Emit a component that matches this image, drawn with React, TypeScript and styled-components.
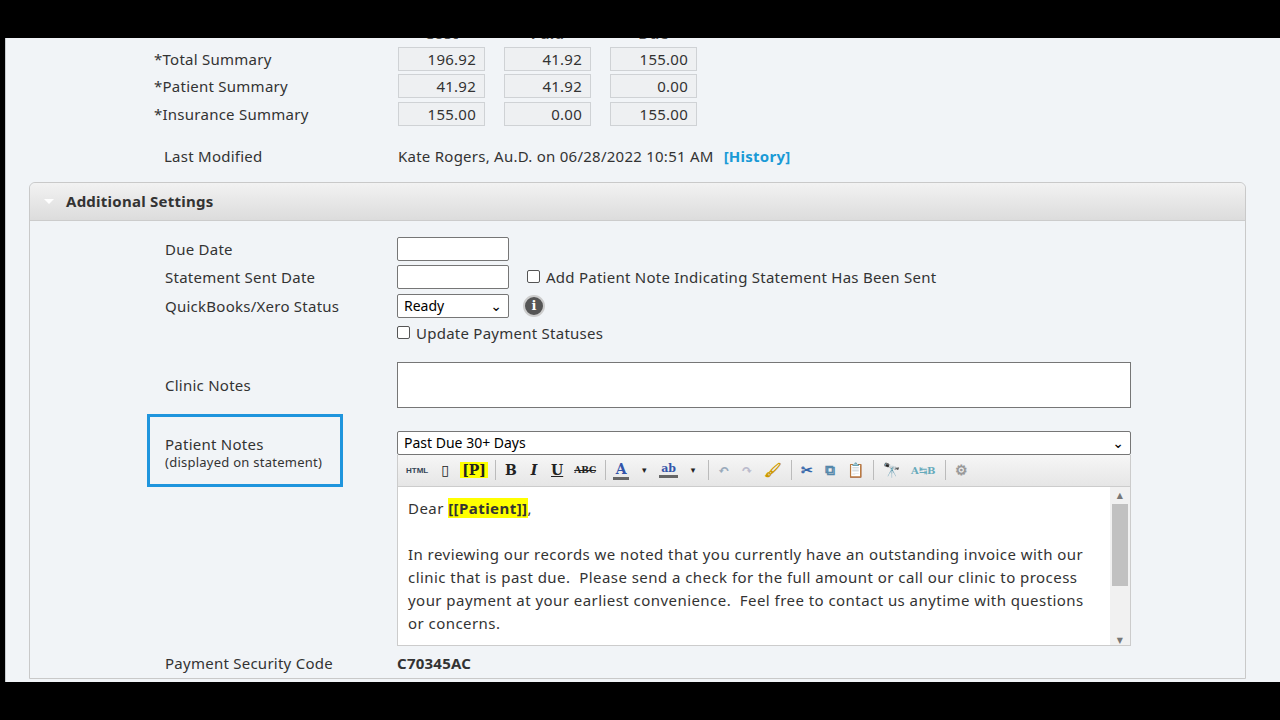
import React from "react";
import styled, { createGlobalStyle } from "styled-components";

const G = createGlobalStyle`
  html,body{margin:0;padding:0;background:#000;}
  *{box-sizing:border-box;}
  body{font-family:"Noto Sans","DejaVu Sans",sans-serif;font-size:15px;color:#333;letter-spacing:0.25px;}
`;
const Frame = styled.div`width:1280px;height:720px;display:flex;flex-direction:column;background:#000;`;
const Page = styled.div`margin-top:38px;height:644px;overflow:hidden;background:#f1f4f7;border-left:1px solid #c8ccd0;margin-left:5px;`;
const Top = styled.div`padding:0 0 0 148px;margin-top:-17px;`;
const Row = styled.div<{h?:number}>`display:flex;align-items:center;height:${p=>p.h||27.5}px;`;
const Lbl = styled.div<{w?:number;pl?:number}>`width:${p=>p.w||244}px;padding-left:${p=>p.pl||0}px;flex-shrink:0;`;
const Num = styled.div`width:87px;height:24px;margin-right:19px;border:1px solid #cfd2d5;background:#eef0f2;text-align:right;padding-right:8px;line-height:22px;font-size:15px;`;
const Head = styled.div`width:87px;margin-right:19px;text-align:center;font-weight:700;color:#555;font-size:15px;`;
const Link = styled.span`color:#1a9ad6;font-weight:700;margin-left:10px;`;
const Panel = styled.div`margin:6px 34px 0 23px;border:1px solid #c9c9c9;border-radius:6px 6px 0 0;`;
const PHead = styled.div`height:38px;background:linear-gradient(#f2f2f2,#dcdcdc);display:flex;align-items:center;padding-left:14px;font-weight:700;color:#333;border-bottom:1px solid #ccc;border-radius:6px 6px 0 0;`;
const Tri = styled.span`width:0;height:0;border-left:5px solid transparent;border-right:5px solid transparent;border-top:5px solid #fff;margin-right:12px;`;
const PBody = styled.div`padding:14px 0 0 135px;`;
const Inp = styled.div<{w?:number}>`width:${p=>p.w||112}px;height:24px;border:1px solid #767676;background:#fff;border-radius:2px;`;
const Sel = styled.div<{w?:number}>`width:${p=>p.w||112}px;height:24px;border:1px solid #767676;background:#fff;border-radius:2px;display:flex;align-items:center;justify-content:space-between;padding:0 6px;font-size:14px;color:#000;letter-spacing:0;`;
const Chk = styled.span`display:inline-block;width:13px;height:13px;border:1px solid #555;border-radius:2px;background:#fff;margin-right:6px;`;
const Info = styled.div`width:22px;height:22px;border-radius:50%;background:#555;border:2px solid #ccc;color:#fff;font-weight:700;font-size:13px;display:flex;align-items:center;justify-content:center;margin-left:14px;font-family:"DejaVu Serif",serif;`;
const TA = styled.div`width:734px;height:46px;border:1px solid #767676;background:#fff;`;
const Blue = styled.div`width:196px;height:73px;border:3px solid #1f95dd;margin-left:-18px;padding:18px 0 0 15px;line-height:18px;`;
const Small = styled.div`font-size:13px;line-height:18px;`;
const Toolbar = styled.div`width:734px;height:32px;border:1px solid #ccc;border-top:none;background:linear-gradient(#f6f6f6,#e6e6e6);display:flex;align-items:center;padding-left:6px;gap:7px;letter-spacing:0;`;
const Sep = styled.span`width:1px;height:20px;background:#bbb;`;
const TB = styled.span<{c?:string;bg?:string}>`font-weight:700;color:${p=>p.c||"#222"};background:${p=>p.bg||"transparent"};font-size:14px;padding:0 2px;font-family:"DejaVu Serif",serif;min-width:16px;text-align:center;`;
const Editor = styled.div`width:734px;height:159px;border:1px solid #ccc;border-top:none;background:#fff;display:flex;`;
const EText = styled.div`flex:1;padding:10px 10px;line-height:23px;color:#333;letter-spacing:0.45px;`;
const Scroll = styled.div`width:20px;background:#f1f1f1;display:flex;flex-direction:column;align-items:center;padding-top:2px;font-size:8px;color:#777;`;
const Thumb = styled.div`width:16px;height:82px;background:#c1c1c1;margin:4px 0;`;
const Hl = styled.span`background:#ffff00;font-weight:700;`;
const NotesWrap = styled.div`display:flex;margin-top:-11px;`;
const NotesCol = styled.div`margin-top:17px;`;

export default function App(){
  return <Frame><G/><Page>
    <Top>
      <Row h={24}><Lbl/><Head>Cost</Head><Head>Paid</Head><Head>Due</Head></Row>
      {[["*Total Summary","196.92","41.92","155.00"],["*Patient Summary","41.92","41.92","0.00"],["*Insurance Summary","155.00","0.00","155.00"]].map(r=>
        <Row key={r[0]}><Lbl>{r[0]}</Lbl><Num>{r[1]}</Num><Num>{r[2]}</Num><Num>{r[3]}</Num></Row>)}
      <Row h={40} style={{marginTop:8}}><Lbl pl={10}>Last Modified</Lbl><span>Kate Rogers, Au.D. on 06/28/2022 10:51 AM</span><Link>[History]</Link></Row>
    </Top>
    <Panel>
      <PHead><Tri/>Additional Settings</PHead>
      <PBody>
        <Row h={28}><Lbl w={232}>Due Date</Lbl><Inp/></Row>
        <Row h={28}><Lbl w={232}>Statement Sent Date</Lbl><Inp/><span style={{marginLeft:18,display:"flex",alignItems:"center"}}><Chk/>Add Patient Note Indicating Statement Has Been Sent</span></Row>
        <Row h={30}><Lbl w={232}>QuickBooks/Xero Status</Lbl><Sel>Ready<span>⌄</span></Sel><Info>i</Info></Row>
        <Row h={24}><Lbl w={232}/><Chk/>Update Payment Statuses</Row>
        <Row h={80}><Lbl w={232}>Clinic Notes</Lbl><TA/></Row>
        <NotesWrap>
          <Lbl w={250} style={{marginRight:-18}}><Blue>Patient Notes<Small>(displayed on statement)</Small></Blue></Lbl>
          <NotesCol>
            <Sel w={734}>Past Due 30+ Days<span>⌄</span></Sel>
            <Toolbar>
              <TB c="#345" style={{fontSize:8,fontFamily:"Liberation Sans"}}>HTML</TB><TB>▯</TB><TB bg="#ff0">[P]</TB><Sep/>
              <TB>B</TB><TB style={{fontStyle:"italic"}}>I</TB><TB style={{textDecoration:"underline"}}>U</TB><TB style={{fontSize:9,textDecoration:"line-through"}}>ABC</TB><Sep/>
              <TB c="#3355aa" style={{borderBottom:"3px solid #666"}}>A</TB><TB style={{fontSize:9}}>▾</TB><TB c="#3355aa" style={{fontSize:11,borderBottom:"3px solid #666"}}>ab</TB><TB style={{fontSize:9}}>▾</TB><Sep/>
              <TB c="#9ab">↶</TB><TB c="#bbc">↷</TB><TB c="#c90">🖌</TB><Sep/>
              <TB c="#36a">✂</TB><TB c="#58a">⧉</TB><TB c="#b80">📋</TB><Sep/>
              <TB c="#456">🔭</TB><TB c="#6ab" style={{fontSize:10}}>A↹B</TB><Sep/><TB c="#999">⚙</TB>
            </Toolbar>
            <Editor>
              <EText>Dear <Hl>[[Patient]]</Hl>,<br/><br/>In reviewing our records we noted that you currently have an outstanding invoice with our clinic that is past due.&nbsp; Please send a check for the full amount or call our clinic to process your payment at your earliest convenience.&nbsp; Feel free to contact us anytime with questions or concerns.</EText>
              <Scroll>▲<Thumb/><div style={{flex:1}}/>▼</Scroll>
            </Editor>
          </NotesCol>
        </NotesWrap>
        <Row h={30} style={{marginTop:2}}><Lbl w={232}>Payment Security Code</Lbl><b>C70345AC</b></Row>
      </PBody>
    </Panel>
  </Page></Frame>;
}
